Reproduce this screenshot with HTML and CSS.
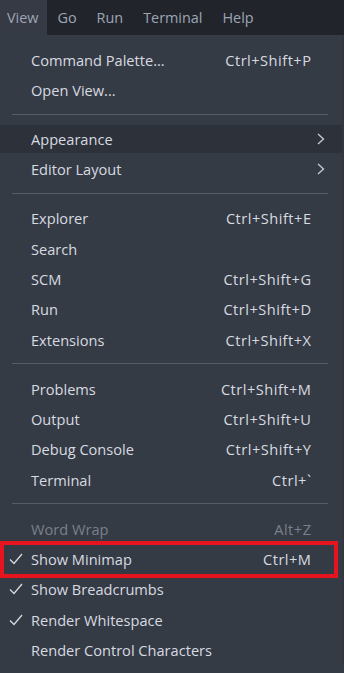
FILE: index.html
```html
<!DOCTYPE html>
<html lang="en">

<head>
    <meta charset="UTF-8">
    <meta name="viewport" content="width=device-width, initial-scale=1.0">
    <title>View menu</title>
    <link rel="stylesheet" href="styles.css">
</head>

<body>
    <div class="menubar">
        <span class="top open">View</span>
        <span class="top">Go</span>
        <span class="top">Run</span>
        <span class="top">Terminal</span>
        <span class="top">Help</span>
    </div>

    <div class="menu">
        <div class="item"><span class="check"></span><span class="label">Command Palette...</span><span class="keys">Ctrl+Shift+P</span><span class="more"></span></div>
        <div class="item"><span class="check"></span><span class="label">Open View...</span><span class="keys"></span><span class="more"></span></div>
        <div class="sep"></div>

        <div class="item hover"><span class="check"></span><span class="label">Appearance</span><span class="keys"></span>
            <span class="more"><svg width="8" height="12" viewBox="0 0 8 12"><path d="M1 1 L6.5 6 L1 11" fill="none" stroke="#c8ccd4" stroke-width="1.3"/></svg></span></div>
        <div class="item"><span class="check"></span><span class="label">Editor Layout</span><span class="keys"></span>
            <span class="more"><svg width="8" height="12" viewBox="0 0 8 12"><path d="M1 1 L6.5 6 L1 11" fill="none" stroke="#c8ccd4" stroke-width="1.3"/></svg></span></div>
        <div class="sep"></div>

        <div class="item"><span class="check"></span><span class="label">Explorer</span><span class="keys">Ctrl+Shift+E</span><span class="more"></span></div>
        <div class="item"><span class="check"></span><span class="label">Search</span><span class="keys"></span><span class="more"></span></div>
        <div class="item"><span class="check"></span><span class="label">SCM</span><span class="keys">Ctrl+Shift+G</span><span class="more"></span></div>
        <div class="item"><span class="check"></span><span class="label">Run</span><span class="keys">Ctrl+Shift+D</span><span class="more"></span></div>
        <div class="item"><span class="check"></span><span class="label">Extensions</span><span class="keys">Ctrl+Shift+X</span><span class="more"></span></div>
        <div class="sep"></div>

        <div class="item"><span class="check"></span><span class="label">Problems</span><span class="keys">Ctrl+Shift+M</span><span class="more"></span></div>
        <div class="item"><span class="check"></span><span class="label">Output</span><span class="keys">Ctrl+Shift+U</span><span class="more"></span></div>
        <div class="item"><span class="check"></span><span class="label">Debug Console</span><span class="keys">Ctrl+Shift+Y</span><span class="more"></span></div>
        <div class="item"><span class="check"></span><span class="label">Terminal</span><span class="keys">Ctrl+`</span><span class="more"></span></div>
        <div class="sep"></div>

        <div class="item disabled"><span class="check"></span><span class="label">Word Wrap</span><span class="keys">Alt+Z</span><span class="more"></span></div>
        <div class="item marked">
            <span class="check"><svg width="14" height="14" viewBox="0 0 14 14"><path d="M1 7.5 L5 11.5 L13 2" fill="none" stroke="#d7dae0" stroke-width="1.3"/></svg></span>
            <span class="label">Show Minimap</span><span class="keys">Ctrl+M</span><span class="more"></span>
        </div>
        <div class="item">
            <span class="check"><svg width="14" height="14" viewBox="0 0 14 14"><path d="M1 7.5 L5 11.5 L13 2" fill="none" stroke="#d7dae0" stroke-width="1.3"/></svg></span>
            <span class="label">Show Breadcrumbs</span><span class="keys"></span><span class="more"></span>
        </div>
        <div class="item">
            <span class="check"><svg width="14" height="14" viewBox="0 0 14 14"><path d="M1 7.5 L5 11.5 L13 2" fill="none" stroke="#d7dae0" stroke-width="1.3"/></svg></span>
            <span class="label">Render Whitespace</span><span class="keys"></span><span class="more"></span>
        </div>
        <div class="item"><span class="check"></span><span class="label">Render Control Characters</span><span class="keys"></span><span class="more"></span></div>
    </div>
</body>

</html>
```

FILE: styles.css
```css
body {
    margin: 0;
    background: #353b45;
    font-family: "Open Sans", "Noto Sans", sans-serif;
    font-size: 14.6px;
    height: 673px;
    overflow: hidden;
}

.menubar {
    display: flex;
    height: 35px;
    align-items: stretch;
    background: #21252b;
    color: #9da5b4;
    font-size: 14.4px;
}

.menubar .top {
    display: flex;
    align-items: center;
    padding: 0 10px;
    padding-bottom: 1px;
}

.menubar .top.open {
    background: #353a44;
    padding-left: 7px;
    padding-right: 9px;
}

.menu {
    display: flex;
    flex-direction: column;
    padding-top: 9.6px;
    color: #d7dae0;
    border-right: 2px solid #31363f;
}

.item {
    position: relative;
    display: flex;
    align-items: center;
    height: 28px;
    margin: 1.2px 0;
}

.item.hover {
    background: #2c313a;
}

.item.disabled {
    color: #7a808b;
}

.check {
    width: 30px;
    display: flex;
    justify-content: center;
    padding-left: 1px;
}

.label {
    flex: 1;
}

.keys {
    white-space: nowrap;
    letter-spacing: 0.5px;
    margin-right: -0.5px;
}

.more {
    width: 31px;
    display: flex;
    padding-left: 6px;
    box-sizing: border-box;
}

.sep {
    height: 1px;
    background: #575c66;
    margin: 8.3px 14px 9.2px 12px;
}

/* annotation box around Show Minimap */
.item.marked::after {
    content: "";
    position: absolute;
    left: 0;
    top: -4px;
    width: 338px;
    height: 37px;
    border: 4.5px solid #e5141f;
    box-sizing: border-box;
}
```
